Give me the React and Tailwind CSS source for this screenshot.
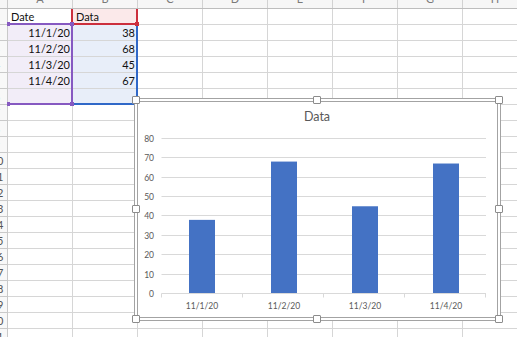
import React from 'react';

const cols = ['A', 'B', 'C', 'D', 'E', 'F', 'G', 'H'];

const rowsData = {
  1: { a: 'Date', b: 'Data', head: true },
  2: { a: '11/1/20', b: '38' },
  3: { a: '11/2/20', b: '68' },
  4: { a: '11/3/20', b: '45' },
  5: { a: '11/4/20', b: '67' },
};

function Row({ r }) {
  const d = rowsData[r];
  const inSel = r >= 2 && r <= 6;
  return (
    <div className="flex h-[16px] shrink-0">
      <div className="w-[8px] shrink-0 overflow-hidden border-r border-b border-[#c9c9c9] bg-[#f8f8f8]">
        <div className="ml-[-18px] w-[30px] text-center text-[11px] leading-[15px] text-[#555]">{r}</div>
      </div>
      {cols.map((c) => {
        let bg = '';
        if (c === 'A' && inSel) bg = 'bg-[#f2edf8]';
        if (c === 'B' && inSel) bg = 'bg-[#e8eef9]';
        if (c === 'B' && r === 1) bg = 'bg-[#fbe9ea]';
        let content = null;
        if (d && c === 'A') content = d.a;
        if (d && c === 'B') content = d.b;
        const align = d && d.head ? 'text-left pl-[3px]' : 'text-right pr-[2px]';
        return (
          <div
            key={c}
            className={`w-[65px] shrink-0 border-r border-b border-[#d6d6d6] overflow-hidden whitespace-nowrap text-[11px] leading-[15px] text-[#111] ${bg} ${align}`}
          >
            {content}
          </div>
        );
      })}
    </div>
  );
}

function Handle({ className }) {
  return <div className={`absolute w-[8px] h-[8px] bg-white border border-[#8c8c8c] rounded-[1px] ${className}`} />;
}

const bars = [
  { label: '11/1/20', v: 38, x: 189 },
  { label: '11/2/20', v: 68, x: 271 },
  { label: '11/3/20', v: 45, x: 352 },
  { label: '11/4/20', v: 67, x: 433 },
];
const yTicks = [
  { v: 80, y: 138 },
  { v: 70, y: 157 },
  { v: 60, y: 177 },
  { v: 50, y: 196 },
  { v: 40, y: 215 },
  { v: 30, y: 235 },
  { v: 20, y: 254 },
  { v: 10, y: 274 },
];
const zeroY = 293.7;
const scale = 1.943;

function Chart() {
  return (
    <div className="absolute left-[134px] top-[98px] w-[367px] h-[223px] border border-[#a3a3a3] bg-white p-[2px]">
      <div className="h-full w-full border border-[#a3a3a3] bg-white">
        <svg width="359" height="215" viewBox="138 102 359 215" className="block">
          <text x="317" y="121" textAnchor="middle" fontSize="12.5" fill="#595959" fontFamily="Lato, sans-serif">
            Data
          </text>
          {yTicks.map((t) => (
            <g key={t.v}>
              <line x1="161.5" x2="486" y1={t.y + 0.5} y2={t.y + 0.5} stroke="#d9d9d9" strokeWidth="1" />
              <text x="154" y={t.y + 3.5} textAnchor="end" fontSize="8.5" fill="#595959" fontFamily="Lato, sans-serif">
                {t.v}
              </text>
            </g>
          ))}
          <text x="154" y="297" textAnchor="end" fontSize="8.5" fill="#595959" fontFamily="Lato, sans-serif">
            0
          </text>
          {bars.map((b) => {
            const top = zeroY - b.v * scale;
            return <rect key={b.label} x={b.x} y={top} width="26" height={293.5 - top} fill="#4472c4" />;
          })}
          <line x1="161.5" x2="486" y1="293.5" y2="293.5" stroke="#d9d9d9" strokeWidth="1" />
          {[161.5, 242.5, 323.5, 404.5, 485.5].map((x) => (
            <line key={x} x1={x} x2={x} y1="293.5" y2="297.5" stroke="#d9d9d9" strokeWidth="1" />
          ))}
          {bars.map((b) => (
            <text key={b.label} x={b.x + 13} y="309" textAnchor="middle" fontSize="8.5" fill="#595959" fontFamily="Lato, sans-serif">
              {b.label}
            </text>
          ))}
        </svg>
      </div>
    </div>
  );
}

export default function App() {
  const rows = Array.from({ length: 21 }, (_, i) => i + 1);
  return (
    <div className="relative w-[517px] h-[337px] overflow-hidden bg-white font-['Lato',sans-serif]">
      <div className="flex flex-col">
        <div className="flex h-[9px] shrink-0 border-b border-[#bdbdbd] bg-[#f6f6f6]">
          <div className="w-[8px] shrink-0 border-r border-[#c9c9c9]" />
          {cols.map((c) => (
            <div
              key={c}
              className="w-[65px] shrink-0 overflow-hidden border-r border-[#d2d2d2] text-center text-[11px] leading-[11px] text-[#7a7a7a]"
            >
              <div className="mt-[-7px]">{c}</div>
            </div>
          ))}
        </div>
        {rows.map((r) => (
          <Row key={r} r={r} />
        ))}
      </div>

      {/* Purple selection A2:A6 */}
      <div className="absolute left-[8px] top-[23px] w-[65px] h-[82px] border-t-2 border-b-2 border-r-2 border-[#8659c1]" />
      {/* Blue selection B2:B6 */}
      <div className="absolute left-[73px] top-[25px] w-[65px] h-[80px] border-b-2 border-r-2 border-[#3068c8]" />
      {/* Red selection B1 */}
      <div className="absolute left-[71px] top-[9px] w-[67px] h-[16px] border-l-2 border-r-2 border-b-2 border-[#cc2f3d]" />
      {/* selection handles */}
      <div className="absolute left-[70px] top-[22px] w-[4px] h-[4px] bg-[#8659c1]" />
      <div className="absolute left-[7px] top-[22px] w-[3px] h-[4px] bg-[#8659c1]" />
      <div className="absolute left-[7px] top-[102px] w-[3px] h-[4px] bg-[#8659c1]" />
      <div className="absolute left-[70px] top-[102px] w-[4px] h-[4px] bg-[#8659c1]" />
      <div className="absolute left-[135px] top-[22px] w-[4px] h-[4px] bg-[#cc2f3d]" />
      <div className="absolute left-[71px] top-[9px] w-[2px] h-[3px] bg-[#cc2f3d]" />
      <div className="absolute left-[136px] top-[9px] w-[2px] h-[3px] bg-[#cc2f3d]" />

      <Chart />

      <Handle className="left-[132px] top-[96px]" />
      <Handle className="left-[313px] top-[96px]" />
      <Handle className="left-[495px] top-[96px]" />
      <Handle className="left-[132px] top-[205px]" />
      <Handle className="left-[495px] top-[205px]" />
      <Handle className="left-[132px] top-[315px]" />
      <Handle className="left-[313px] top-[315px]" />
      <Handle className="left-[495px] top-[315px]" />
    </div>
  );
}
